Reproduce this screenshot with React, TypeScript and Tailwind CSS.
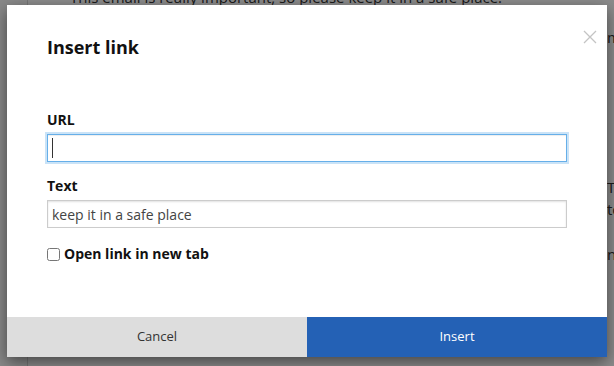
import React from "react";

function CloseIcon() {
  return (
    <svg width="14" height="14" viewBox="0 0 14 14" fill="none">
      <path d="M1 1L13 13M13 1L1 13" stroke="#c4c4c4" strokeWidth="1.3" />
    </svg>
  );
}

export default function App() {
  return (
    <div className="relative w-[614px] h-[366px] overflow-hidden bg-white font-['Open_Sans',sans-serif]">
      {/* Page underneath the dialog */}
      <div className="flex h-full text-[15px] leading-[22px] text-[#333]">
        <div className="w-[28px] shrink-0 bg-[#fafafa] border-r border-[#d8d8d8]" />
        <div className="w-[579px] shrink-0 pl-[42px] -mt-[14px] whitespace-nowrap">
          <p>This email is really important, so please keep it in a safe place.</p>
        </div>
        <div className="flex-1 whitespace-nowrap">
          <p className="mt-[26px]">me</p>
          <p className="mt-[128px]">The</p>
          <p>to</p>
          <p className="mt-[23px]">no</p>
        </div>
      </div>

      {/* Dialog overlay */}
      <div className="absolute inset-0 bg-black/45 pt-[5px] pl-[7px]">
        <div className="relative w-[600px] bg-white shadow-[0_5px_15px_rgba(0,0,0,0.5)]">
          <button className="absolute right-[10px] top-[25px]">
            <CloseIcon />
          </button>

          <div className="h-[312px] px-[40px] pt-[30px]">
            <h2 className="text-[18px] leading-[25px] font-bold text-[#111]">Insert link</h2>

            <label className="block mt-[50px] text-[14px] leading-[20px] font-bold text-[#111]">URL</label>
            <div className="relative mt-[4px]">
              <input
                type="text"
                className="block w-full h-[28px] px-[4px] border border-[#66afe9] text-[14px] text-[#444] outline-none caret-transparent shadow-[inset_0_1px_1px_rgba(0,0,0,0.075),0_0_0_2px_rgba(102,175,233,0.35)]"
              />
              <span className="absolute left-[5px] top-[4px] w-[1px] h-[20px] bg-[#333]" />
            </div>

            <label className="block mt-[14px] text-[14px] leading-[20px] font-bold text-[#111]">Text</label>
            <input
              type="text"
              defaultValue="keep it in a safe place"
              className="block mt-[4px] w-full h-[28px] px-[4px] border border-[#ccc] text-[14px] text-[#444] outline-none shadow-[inset_0_1px_2px_rgba(0,0,0,0.12)]"
            />

            <label className="flex items-center gap-[4px] mt-[16px] text-[14px] leading-[20px] font-bold text-[#111]">
              <input type="checkbox" className="w-[13px] h-[13px] m-0" />
              Open link in new tab
            </label>
          </div>

          <div className="grid grid-cols-2 h-[40px] text-[13px]">
            <button className="bg-[#dddddd] text-[#333]">Cancel</button>
            <button className="bg-[#2461b5] text-white">Insert</button>
          </div>
        </div>
      </div>
    </div>
  );
}
